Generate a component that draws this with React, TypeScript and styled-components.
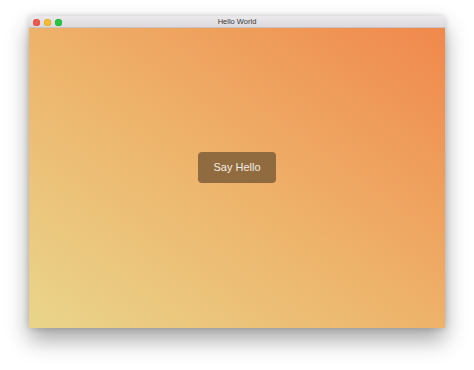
import React from 'react';
import styled, { createGlobalStyle } from 'styled-components';

const GlobalStyle = createGlobalStyle`
  html, body {
    margin: 0;
    padding: 0;
    background: #ffffff;
  }
  body {
    font-family: "Liberation Sans", Arial, sans-serif;
  }
`;

const Page = styled.div`
  width: 474px;
  height: 370px;
  box-sizing: border-box;
  padding: 16px 29px 0 29px;
  overflow: hidden;
`;

const Window = styled.div`
  width: 416px;
  height: 312px;
  display: flex;
  flex-direction: column;
  border-radius: 3px 3px 0 0;
  overflow: hidden;
  box-shadow: 0 12px 22px rgba(0, 0, 0, 0.35), 0 0 6px rgba(0, 0, 0, 0.18);
`;

const TitleBar = styled.div`
  position: relative;
  height: 12px;
  flex: 0 0 12px;
  display: flex;
  align-items: center;
  justify-content: center;
  background: linear-gradient(to bottom, #ebe9eb, #dcdadc);
  border-bottom: 1px solid #c9c2c2;
  box-sizing: border-box;
`;

const Lights = styled.div`
  position: absolute;
  left: 4px;
  top: 3px;
  display: flex;
  gap: 4px;
`;

const Light = styled.span<{ $color: string; $border: string }>`
  width: 7px;
  height: 7px;
  border-radius: 50%;
  background: ${({ $color }) => $color};
  box-shadow: inset 0 0 0 0.5px ${({ $border }) => $border};
`;

const Title = styled.span`
  font-size: 7.5px;
  color: #3a3a3a;
  line-height: 1;
`;

const Content = styled.div`
  flex: 1;
  display: flex;
  align-items: center;
  justify-content: center;
  background: linear-gradient(to top right, #e9d58b 0%, #eeb26a 50%, #f0884c 100%);
`;

const Button = styled.button`
  width: 78px;
  height: 31px;
  margin-top: -22px;
  border: none;
  border-radius: 4px;
  background: #8f6b3f;
  color: #f4ede4;
  font-family: "Liberation Sans", Arial, sans-serif;
  font-size: 11px;
  cursor: pointer;
`;

export default function App() {
  return (
    <>
      <GlobalStyle />
      <Page>
        <Window>
          <TitleBar>
            <Lights>
              <Light $color="#ee5a52" $border="#d64b43" />
              <Light $color="#f5bd30" $border="#dea123" />
              <Light $color="#2bc641" $border="#1fa833" />
            </Lights>
            <Title>Hello World</Title>
          </TitleBar>
          <Content>
            <Button>Say Hello</Button>
          </Content>
        </Window>
      </Page>
    </>
  );
}
